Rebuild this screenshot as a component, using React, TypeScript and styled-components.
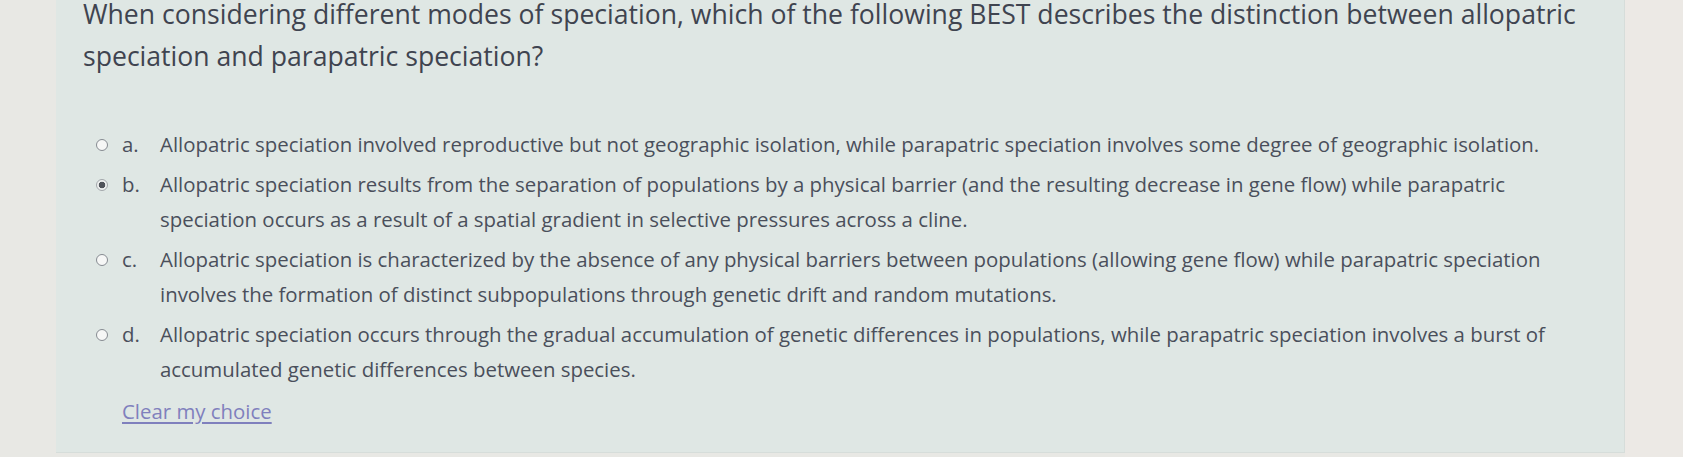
import React from 'react'
import styled, { createGlobalStyle } from 'styled-components'

const GlobalStyle = createGlobalStyle`
  html, body {
    margin: 0;
    padding: 0;
    background: #e9e9e5;
  }
`

const Page = styled.div`
  display: flex;
  width: 1683px;
  height: 457px;
  overflow: hidden;
  background: #e8e8e4;
  font-family: 'Open Sans', Lato, 'Liberation Sans', sans-serif;
`

const LeftEdge = styled.div`
  width: 56px;
  flex-shrink: 0;
`

const Panel = styled.div`
  width: 1569px;
  height: 453px;
  flex-shrink: 0;
  background: #dfe7e4;
  box-sizing: border-box;
  padding: 0 0 0 27px;
  border-right: 1px solid #d6ddda;
  border-bottom: 1px solid #d6ddda;
`

const RightEdge = styled.div`
  flex: 1;
  background: #ece9e5;
`

const Question = styled.div`
  margin-top: -7px;
  font-size: 26.6px;
  line-height: 42px;
  color: #3f4450;
  white-space: nowrap;
`

const Answers = styled.div`
  margin-top: 50px;
  padding-left: 14px;
  display: flex;
  flex-direction: column;
  gap: 5px;
`

const Option = styled.div`
  display: flex;
  align-items: flex-start;
  font-size: 20.4px;
  line-height: 35px;
  color: #4a4f5b;
`

const RadioBox = styled.div`
  width: 25px;
  height: 35px;
  display: flex;
  align-items: center;
  flex-shrink: 0;
`

const Radio = styled.span<{ $checked?: boolean }>`
  width: 12px;
  height: 12px;
  margin-left: -1px;
  border-radius: 50%;
  box-sizing: border-box;
  border: 1.5px solid ${({ $checked }) => ($checked ? '#a3a7ab' : '#868b91')};
  background: ${({ $checked }) => ($checked ? 'radial-gradient(circle, #50545a 0 3px, #eef0ef 3.6px)' : '#f6f7f6')};
`

const Letter = styled.span`
  width: 38px;
  flex-shrink: 0;
`

const Lines = styled.div`
  display: flex;
  flex-direction: column;
  white-space: nowrap;
`

const ClearLink = styled.a`
  display: inline-block;
  margin-top: 2px;
  margin-left: 25px;
  font-size: 20.4px;
  line-height: 34px;
  color: #7f80bd;
  text-decoration: underline;
  text-underline-offset: 3px;
`

const options = [
  {
    letter: 'a.',
    lines: [
      'Allopatric speciation involved reproductive but not geographic isolation, while parapatric speciation involves some degree of geographic isolation.',
    ],
  },
  {
    letter: 'b.',
    checked: true,
    lines: [
      'Allopatric speciation results from the separation of populations by a physical barrier (and the resulting decrease in gene flow) while parapatric',
      'speciation occurs as a result of a spatial gradient in selective pressures across a cline.',
    ],
  },
  {
    letter: 'c.',
    lines: [
      'Allopatric speciation is characterized by the absence of any physical barriers between populations (allowing gene flow) while parapatric speciation',
      'involves the formation of distinct subpopulations through genetic drift and random mutations.',
    ],
  },
  {
    letter: 'd.',
    lines: [
      'Allopatric speciation occurs through the gradual accumulation of genetic differences in populations, while parapatric speciation involves a burst of',
      'accumulated genetic differences between species.',
    ],
  },
]

const App = () => (
  <>
    <GlobalStyle />
    <Page>
      <LeftEdge />
      <Panel>
        <Question>
          <div>
            When considering different modes of speciation, which of the following BEST describes the distinction between allopatric
          </div>
          <div>speciation and parapatric speciation?</div>
        </Question>
        <Answers>
          {options.map((o) => (
            <Option key={o.letter}>
              <RadioBox>
                <Radio $checked={o.checked} />
              </RadioBox>
              <Letter>{o.letter}</Letter>
              <Lines>
                {o.lines.map((l) => (
                  <span key={l}>{l}</span>
                ))}
              </Lines>
            </Option>
          ))}
          <div>
            <ClearLink href="#">Clear my choice</ClearLink>
          </div>
        </Answers>
      </Panel>
      <RightEdge />
    </Page>
  </>
)

export default App
